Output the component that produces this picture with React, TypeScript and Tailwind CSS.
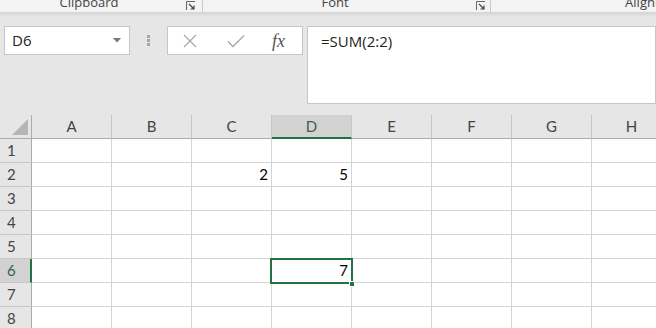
import React from "react";

const cols = ["A", "B", "C", "D", "E", "F", "G", "H"];
const rows = [1, 2, 3, 4, 5, 6, 7, 8];
const values: Record<string, string> = { C2: "2", D2: "5", D6: "7" };

const Launcher = () => (
  <svg width="10" height="10" viewBox="0 0 10 10" className="shrink-0">
    <path d="M0.5 9V0.5H9" fill="none" stroke="#666" strokeWidth="1" />
    <path d="M3 3L8 8M8 4.5V8H4.5" fill="none" stroke="#444" strokeWidth="1.2" />
  </svg>
);

const RibbonStrip = () => (
  <div className="flex h-[12px] overflow-hidden bg-[#f3f3f3] text-[13px] leading-[13px] text-[#444]">
    <div className="flex w-[203px] shrink-0">
      <div className="w-[178px] text-center -mt-[4px]">Clipboard</div>
      <div className="ml-[8px] mt-[1px]"><Launcher /></div>
      <div className="ml-[6px] h-full w-px bg-[#c8c8c8]" />
    </div>
    <div className="flex w-[288px] shrink-0">
      <div className="w-[264px] text-center -mt-[4px]">Font</div>
      <div className="ml-[9px] mt-[1px]"><Launcher /></div>
      <div className="ml-[4px] h-full w-px bg-[#c8c8c8]" />
    </div>
    <div className="w-[330px] shrink-0 text-center -mt-[4px] whitespace-nowrap">Alignment</div>
  </div>
);

const FormulaBar = () => (
  <div className="flex h-[91px] items-start pt-[9px] font-['Open_Sans',sans-serif]">
    <div className="ml-[4px] flex h-[29px] w-[126px] items-center border border-[#c6c6c6] bg-white pl-[7px] pr-[8px]">
      <span className="flex-1 text-[15px] text-[#222]">D6</span>
      <svg width="8" height="5" viewBox="0 0 8 5">
        <path d="M0 0H8L4 4.5Z" fill="#777" />
      </svg>
    </div>
    <div className="ml-[17px] mt-[9px] flex w-[4px] flex-col gap-[1px]">
      <div className="h-[3px] w-[3px] bg-[#a6a6a6]" />
      <div className="h-[3px] w-[3px] bg-[#a6a6a6]" />
      <div className="h-[3px] w-[3px] bg-[#a6a6a6]" />
    </div>
    <div className="ml-[16px] flex h-[29px] w-[136px] items-center border border-[#c6c6c6] bg-white">
      <svg width="14" height="14" viewBox="0 0 14 14" className="ml-[15px]">
        <path d="M1 1L13 13M13 1L1 13" stroke="#a9a9a9" strokeWidth="1.2" fill="none" />
      </svg>
      <svg width="18" height="14" viewBox="0 0 18 14" className="ml-[30px]">
        <path d="M1 7.5L6 12.5L17 1.5" stroke="#a9a9a9" strokeWidth="1.4" fill="none" />
      </svg>
      <span className="ml-[27px] font-['Liberation_Serif',serif] text-[18px] italic leading-none text-[#555]">
        fx
      </span>
    </div>
    <div className="ml-[4px] flex h-[78px] flex-1 items-start border border-[#c6c6c6] bg-white pl-[13px] pt-[3px]">
      <span className="text-[15px] text-[#222]">=SUM(2:2)</span>
    </div>
  </div>
);

const Grid = () => (
  <div className="relative font-['Lato',sans-serif] text-[15px]">
    <div className="flex h-[24px]">
      <div className="relative w-[32px] shrink-0 border-b border-r border-[#ababab] bg-[#e6e6e6]">
        <svg width="17" height="17" viewBox="0 0 17 17" className="absolute left-[12px] top-[4px]">
          <path d="M0 16H16V0Z" fill="#b5b5b5" />
        </svg>
      </div>
      {cols.map((c) =>
        c === "D" ? (
          <div
            key={c}
            className="flex w-[80px] shrink-0 items-center justify-center border-b-2 border-r border-b-[#217346] border-r-[#c6c6c6] bg-[#d2d2d2] pt-[1px] text-[#3f5f4a]"
          >
            {c}
          </div>
        ) : (
          <div
            key={c}
            className="flex w-[80px] shrink-0 items-center justify-center border-b border-r border-b-[#ababab] border-r-[#c6c6c6] bg-[#e6e6e6] text-[#444]"
          >
            {c}
          </div>
        )
      )}
    </div>
    {rows.map((r) => (
      <div key={r} className="flex h-[24px]">
        {r === 6 ? (
          <div className="flex w-[32px] shrink-0 items-center border-b border-r-2 border-b-[#c6c6c6] border-r-[#217346] bg-[#d2d2d2] pl-[7px] text-[#3f5f4a]">
            {r}
          </div>
        ) : (
          <div className="flex w-[32px] shrink-0 items-center border-b border-r border-b-[#c6c6c6] border-r-[#ababab] bg-[#e6e6e6] pl-[7px] text-[#444]">
            {r}
          </div>
        )}
        {cols.map((c) => (
          <div
            key={c}
            className="flex w-[80px] shrink-0 items-center justify-end border-b border-r border-[#d4d4d4] bg-white pr-[3px] text-black"
          >
            {values[`${c}${r}`] ?? ""}
          </div>
        ))}
      </div>
    ))}
    <div className="pointer-events-none absolute left-[270px] top-[143px] h-[26px] w-[83px] border-2 border-[#217346]" />
    <div className="absolute left-[349px] top-[166px] h-[6px] w-[6px] border border-white bg-[#217346]" />
  </div>
);

export default function App() {
  return (
    <div className="h-[328px] w-[656px] overflow-hidden bg-[#e6e6e6] font-['Open_Sans',sans-serif]">
      <RibbonStrip />
      <div className="h-[5px] bg-gradient-to-b from-[#d4d4d4] to-[#e6e6e6]" />
      <FormulaBar />
      <div className="h-[7px]" />
      <Grid />
    </div>
  );
}
